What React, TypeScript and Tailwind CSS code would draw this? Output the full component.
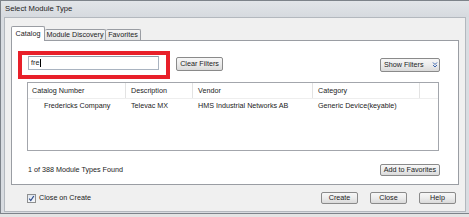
import React from 'react';

const columns = [
    { label: 'Catalog Number', width: 'w-[98px]' },
    { label: 'Description', width: 'w-[67px]' },
    { label: 'Vendor', width: 'w-[120px]' },
    { label: 'Category', width: 'w-[107px]' },
];

const WinButton: React.FC<{ className?: string; children: React.ReactNode }> = ({ className = '', children }) => (
    <button
        className={`flex items-center justify-center rounded-[2px] border border-[#8a8a8a] bg-linear-to-b from-[#f7f7f7] via-[#ececec] to-[#dadada] leading-none text-[#1b1b1b] ${className}`}
    >
        {children}
    </button>
);

const App: React.FC = () => {
    return (
        <div className="w-[469px] h-[217px] overflow-hidden bg-[#e4e4e4] font-['Liberation_Sans',Arial,sans-serif] text-[7.2px] text-[#1b1b1b]">
            {/* window frame */}
            <div className="flex h-[214px] flex-col border-t border-l border-b border-[#7d838a] bg-[#d8dce1]">
                <div className="flex h-[16px] shrink-0 items-center bg-linear-to-b from-[#e2e5e9] to-[#d6dadf] pl-[4px] text-[7.7px] leading-none text-[#1e1e1e]">
                    Select Module Type
                </div>

                <div className="flex flex-1 px-[3px] pb-[1px]">
                    <div className="flex flex-1 flex-col border border-[#b3b8be] bg-[#f0f0f0]">
                        {/* tabs */}
                        <div className="ml-[6px] mt-[8px] flex h-[14px] items-end">
                            <div className="relative z-10 flex h-[15px] w-[34px] -mb-[1px] items-start justify-center rounded-t-[2px] border border-b-0 border-[#9a9da3] bg-white pt-[3px] leading-none">
                                Catalog
                            </div>
                            <div className="flex h-[11px] w-[61px] items-center justify-center rounded-t-[2px] border border-b-0 border-l-0 border-[#9a9da3] bg-linear-to-b from-[#f4f4f4] to-[#e4e4e4] leading-none">
                                Module Discovery
                            </div>
                            <div className="flex h-[11px] w-[35px] items-center justify-center rounded-t-[2px] border border-b-0 border-l-0 border-[#9a9da3] bg-linear-to-b from-[#f4f4f4] to-[#e4e4e4] leading-none">
                                Favorites
                            </div>
                        </div>

                        {/* tab panel */}
                        <div className="mx-[6px] flex h-[145px] flex-col border border-[#9a9da3] bg-white">
                            <div className="mt-[15px] flex items-start pl-[16px] pr-[18px]">
                                <div className="relative">
                                    <div className="flex h-[14px] w-[131px] items-center border border-[#a9b3c0] border-t-[#8e9aa8] bg-white pl-[2px] leading-none">
                                        fre
                                        <span className="ml-[1px] h-[8px] w-px bg-black" />
                                    </div>
                                    {/* highlight annotation */}
                                    <div className="pointer-events-none absolute -left-[10px] -top-[5px] h-[28px] w-[152px] border-[4px] border-[#e8202a]" />
                                </div>
                                <WinButton className="ml-[17px] mt-[1px] h-[14px] w-[47px]">Clear Filters</WinButton>
                                <WinButton className="ml-auto mt-[2px] h-[14px] w-[60px] !justify-start gap-[8px] pl-[3px]">
                                    <span>Show Filters</span>
                                    <svg width="6" height="6" viewBox="0 0 6 6" fill="none" stroke="#3b66b0" strokeWidth="1">
                                        <polyline points="1,0.5 3,2.5 5,0.5" />
                                        <polyline points="1,3 3,5 5,3" />
                                    </svg>
                                </WinButton>
                            </div>

                            {/* results list */}
                            <div className="ml-[15px] mt-[10px] h-[69px] w-[412px] border border-[#a3a6ac] bg-white">
                                <div className="flex h-[16px] border-b border-[#eeeeee]">
                                    {columns.map((c, i) => (
                                        <div key={c.label} className={`${c.width} flex items-center border-r border-[#e3e3e3] leading-none ${i === 0 ? 'pl-[4px]' : 'pl-[5px]'}`}>
                                            {c.label}
                                        </div>
                                    ))}
                                    <div className="flex-1" />
                                </div>
                                <div className="flex h-[14px] items-center leading-none">
                                    <div className="w-[98px] pl-[16px]">Fredericks Company</div>
                                    <div className="w-[67px] pl-[5px]">Televac MX</div>
                                    <div className="w-[120px] pl-[5px]">HMS Industrial Networks AB</div>
                                    <div className="w-[107px] pl-[5px]">Generic Device(keyable)</div>
                                </div>
                            </div>

                            <div className="mt-[13px] flex h-[12px] items-center pl-[16px] pr-[18px]">
                                <span className="leading-none">1 of 388 Module Types Found</span>
                                <WinButton className="ml-auto h-[12px] w-[60px]">Add to Favorites</WinButton>
                            </div>
                        </div>

                        {/* footer */}
                        <div className="mt-[7px] flex h-[12px] items-center pl-[22px] pr-[9px]">
                            <div className="flex h-[9px] w-[9px] items-center justify-center border border-[#8e8f8f] bg-linear-to-b from-[#dfe6ef] to-[#f6f8fb]">
                                <svg width="7" height="7" viewBox="0 0 7 7" fill="none" stroke="#2f4d8c" strokeWidth="1.2">
                                    <polyline points="1.2,3.6 2.8,5.6 5.8,1" />
                                </svg>
                            </div>
                            <span className="ml-[3px] leading-none">Close on Create</span>
                            <div className="ml-auto flex gap-[12px]">
                                <WinButton className="h-[12px] w-[37px]">Create</WinButton>
                                <WinButton className="h-[12px] w-[37px]">Close</WinButton>
                                <WinButton className="h-[12px] w-[37px]">Help</WinButton>
                            </div>
                        </div>
                    </div>
                </div>
            </div>
        </div>
    );
};

export default App;
